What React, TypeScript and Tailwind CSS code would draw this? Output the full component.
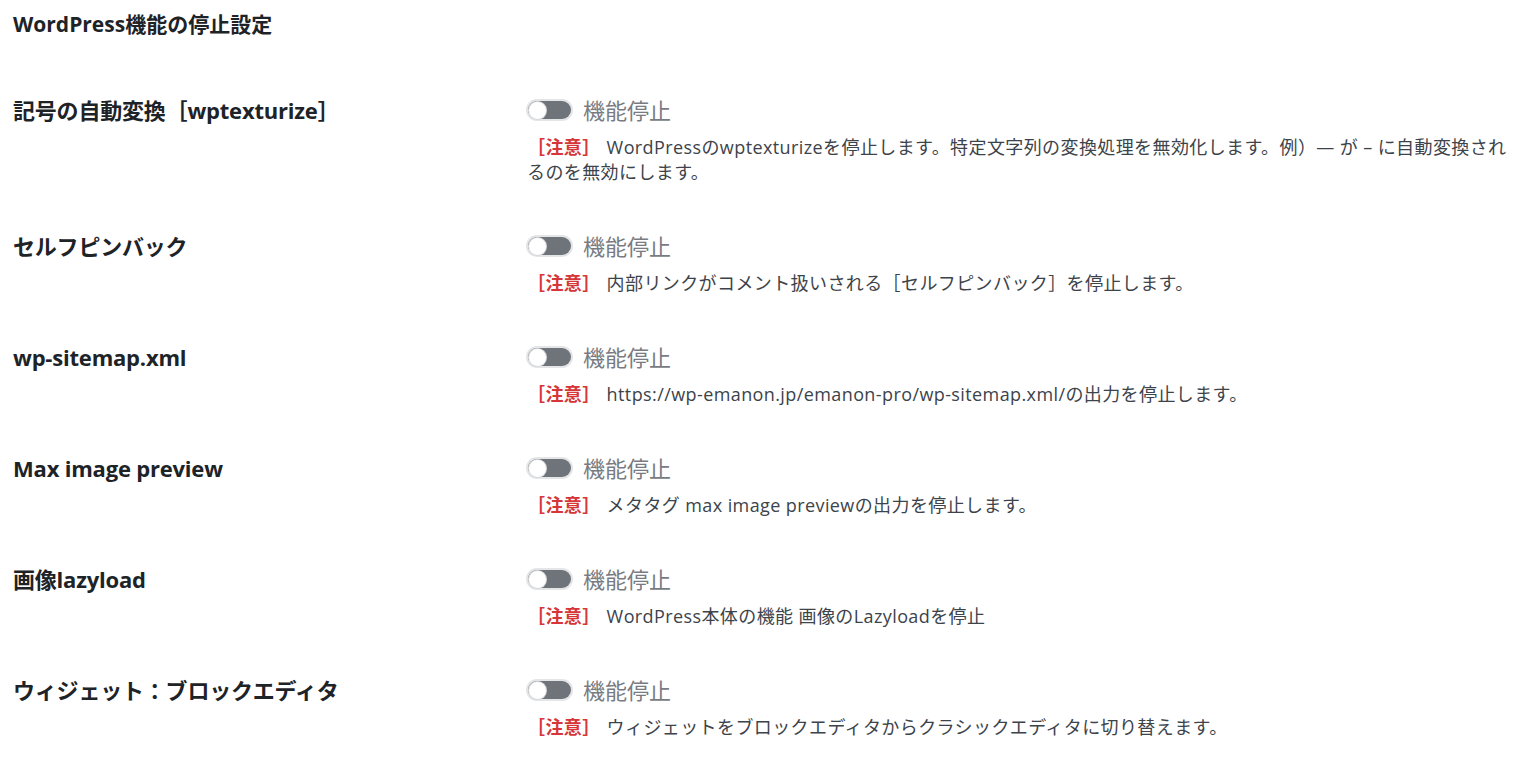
const settings = [
  {
    label: '記号の自動変換［wptexturize］',
    note: 'WordPressのwptexturizeを停止します。特定文字列の変換処理を無効化します。例）— が – に自動変換されるのを無効にします。',
  },
  { label: 'セルフピンバック', note: '内部リンクがコメント扱いされる［セルフピンバック］を停止します。' },
  { label: 'wp-sitemap.xml', note: 'https://wp-emanon.jp/emanon-pro/wp-sitemap.xml/の出力を停止します。' },
  { label: 'Max image preview', note: 'メタタグ max image previewの出力を停止します。' },
  { label: '画像lazyload', note: 'WordPress本体の機能 画像のLazyloadを停止' },
  { label: 'ウィジェット：ブロックエディタ', note: 'ウィジェットをブロックエディタからクラシックエディタに切り替えます。' },
]

function Toggle() {
  return (
    <span className="inline-flex h-[22px] w-[47px] shrink-0 items-center rounded-full bg-[#e4e5e7] p-[2px]">
      <span className="flex h-[18px] w-[43px] items-center rounded-full bg-[#6f747b] p-[1px]">
        <span className="h-[17px] w-[17px] rounded-full bg-white shadow-[0_0_0_1px_#d8d9db]" />
      </span>
    </span>
  )
}

export default function App() {
  return (
    <div
      className="min-h-screen bg-white px-[13px] text-[#1d2327]"
      style={{ fontFamily: '"Open Sans", "Noto Sans CJK JP", sans-serif' }}
    >
      <h1 className="pt-[10px] text-[21px] font-bold leading-[28px]">WordPress機能の停止設定</h1>

      <div className="mt-[34px]">
        {settings.map((s) => (
          <div key={s.label} className="flex pt-[23px] pb-[23px]">
            <div className="w-[513px] shrink-0 text-[22px] font-bold leading-[30px] tracking-[-0.2px]">{s.label}</div>
            <div className="flex-1 pr-[6px]">
              <label className="flex h-[30px] items-center gap-[10px]">
                <Toggle />
                <span className="text-[22px] leading-[30px] text-[#787c82]">機能停止</span>
              </label>
              <p className="ml-[1px] mt-[10px] text-[18px] leading-[25px] tracking-[0.4px] text-[#3c434a]">
                <span className="mr-[6px] font-bold text-[#d63638]">［注意］</span>
                {s.note}
              </p>
            </div>
          </div>
        ))}
      </div>
    </div>
  )
}
